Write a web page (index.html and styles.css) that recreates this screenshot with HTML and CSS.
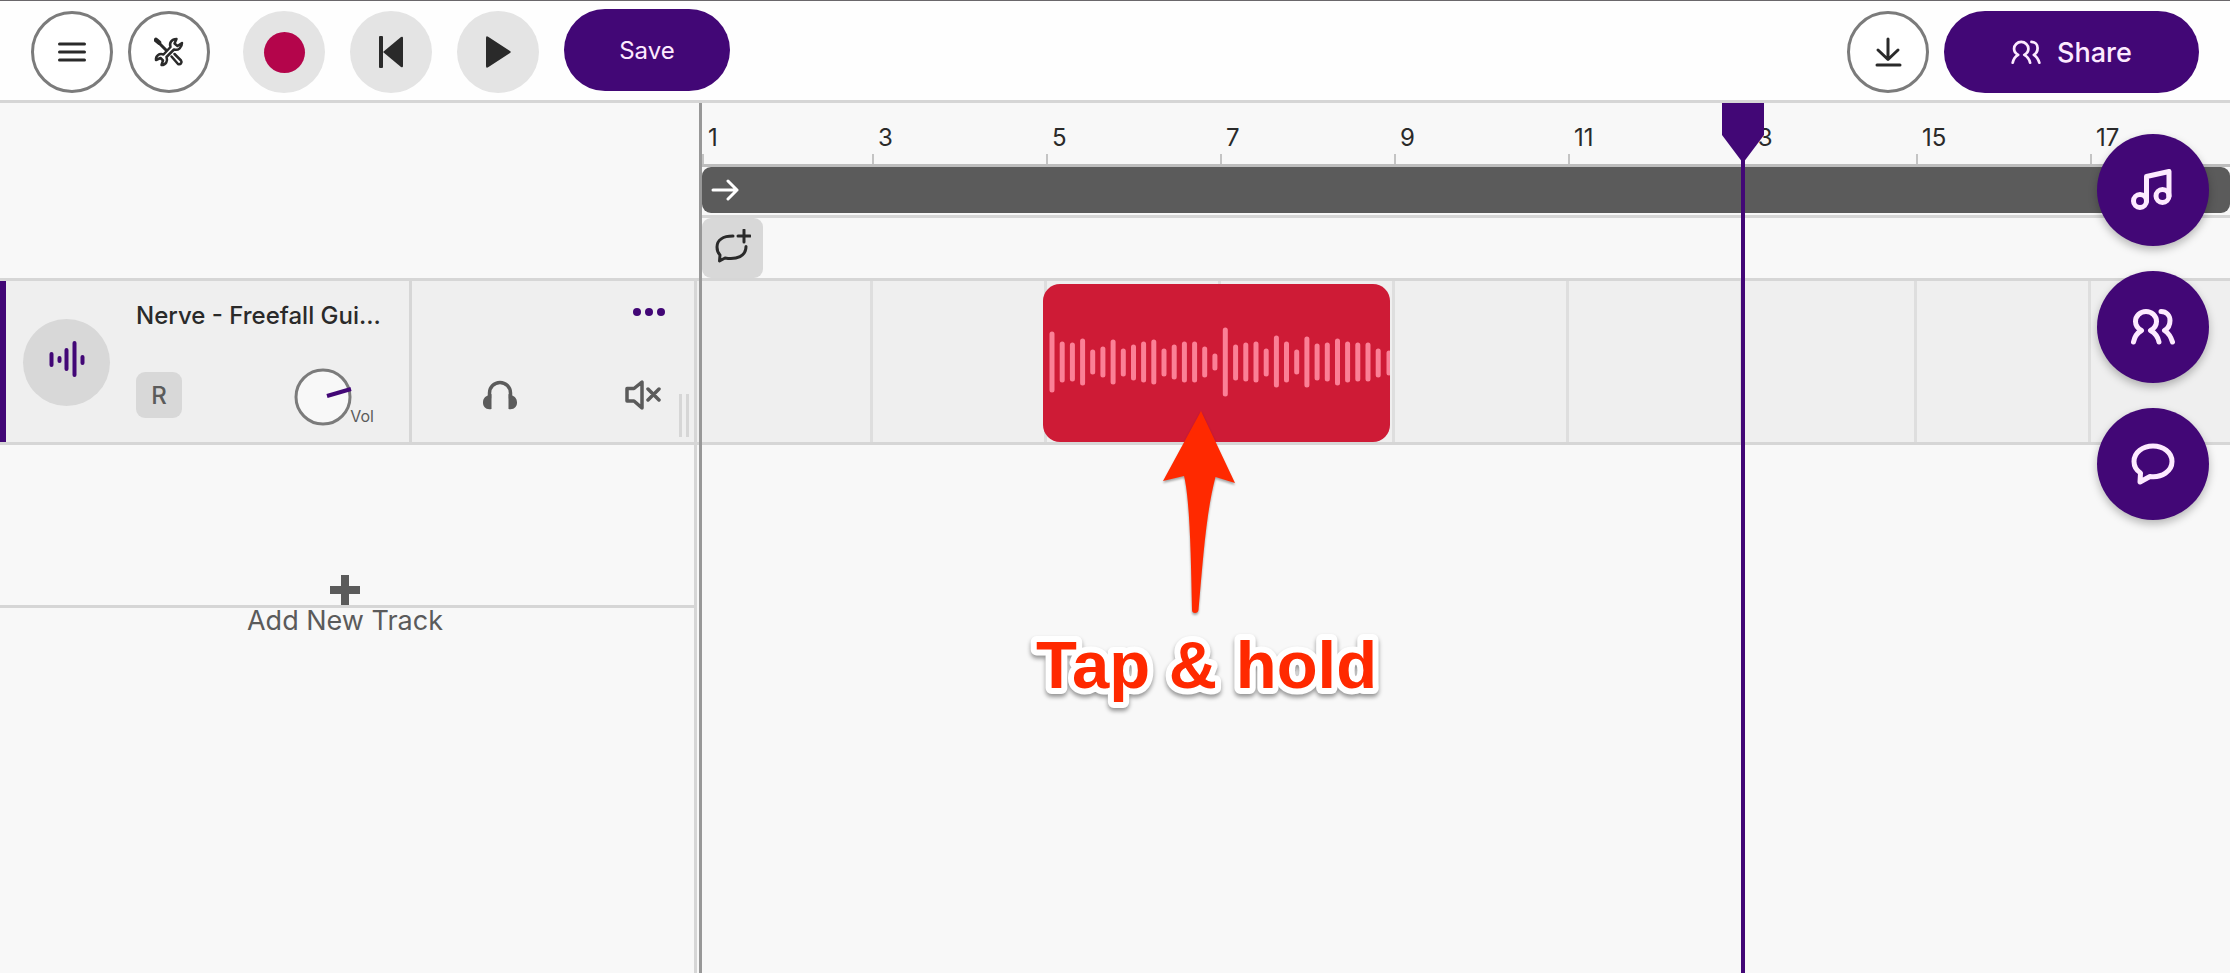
FILE: index.html
```html
<!DOCTYPE html>
<html lang="en">
<head>
<meta charset="utf-8">
<title>Studio</title>
<link rel="stylesheet" href="styles.css">
</head>
<body>
<svg class="defs" aria-hidden="true">
  <symbol id="people" viewBox="0 0 44 36">
    <path d="M2.500 33C3.500 28 6 24 10.500 21.500C6 19 4.500 16 4.500 12.500A10.500 10 0 0 1 25.500 12.500C25.500 16 24 19 19.500 21.500C24 24 27 28 28 33M30 2.500C35.500 2.500 39 6.500 39 11.500C39 16 38 19 33.500 21.500C37.500 24 40 28 41.500 33"/>
  </symbol>
</svg>
<header class="toolbar">
  <div class="group">
    <button class="round outline" aria-label="Menu"><svg width="28" height="24" viewBox="0 0 28 24" class="line"><path d="M1.500 4h25M1.500 12h25M1.500 20h25"/></svg></button>
    <button class="round outline" aria-label="Tools"><svg width="30" height="30" viewBox="0 0 30 30" class="line tools">
      <path d="M3 4L12 13" stroke-width="3"/><path d="M2 3L5 5.500" stroke-width="4.500"/>
      <path d="M17.500 19.500L24 27C26.500 28 28.500 25.500 27 23.500L20.500 17"/>
      <path d="M22.500 2C17.500 2 15 6 16.500 10L9.500 17.500C5 16 1.500 19 2 23L6.500 21L9 23.500L7.500 28C12 28 14 24 12.500 20L20 12.500C24.500 14 28 10 28 6L23.500 9L20.500 6.500Z"/>
    </svg></button>
  </div>
  <div class="group transport">
    <button class="round" aria-label="Record"><span class="record"></span></button>
    <button class="round" aria-label="Back to start"><svg width="28" height="34" viewBox="0 0 28 34" class="solid"><rect x="2" y="1" width="4" height="32" rx="1"/><path d="M6 17L24 2Q26 1 26 3V31Q26 33 24 32Z"/></svg></button>
    <button class="round" aria-label="Play"><svg width="28" height="34" viewBox="0 0 28 34" class="solid"><path d="M2 3Q2 0 4.500 2L26 16Q27.500 17 26 18L4.500 32Q2 34 2 31Z"/></svg></button>
  </div>
  <button class="pill save">Save</button>
  <div class="group end">
    <button class="round outline" aria-label="Download"><svg width="28" height="30" viewBox="0 0 28 30" class="line"><path d="M14 2V22M4 13L14 22.500L24 13M3 28h23"/></svg></button>
    <button class="pill share"><svg width="30" height="25" class="ico"><use href="#people"/></svg>Share</button>
  </div>
</header>
<main class="studio">
  <section class="tracks">
    <div class="tracks-head"></div>
    <article class="track">
      <div class="track-main">
        <span class="avatar"><svg width="36" height="36" viewBox="0 0 36 36"><path d="M2.500 13v11M10.500 17v3M17.500 9v19M25.500 2v32M33.500 16v6"/></svg></span>
        <div class="track-info">
          <h2>Nerve - Freefall Gui...</h2>
          <div class="track-row">
            <button class="rec">R</button>
            <div class="volume">
              <svg width="60" height="58" viewBox="0 0 60 58"><circle cx="29" cy="29" r="27"/><path d="M33 28L57 21"/></svg>
              <span>Vol</span>
            </div>
          </div>
        </div>
      </div>
      <div class="track-side">
        <button class="plain more" aria-label="More"><svg width="34" height="10" viewBox="0 0 34 10"><circle cx="5" cy="5" r="4"/><circle cx="17" cy="5" r="4"/><circle cx="29" cy="5" r="4"/></svg></button>
        <div class="track-tools">
          <button class="plain" aria-label="Solo"><svg width="36" height="30" viewBox="0 0 36 30" class="gray"><path class="stroke" d="M7.500 18V13A10.500 10.500 0 0 1 28.500 13V18"/><path d="M9.500 14V29C4 30 1 27 1 22.500C1 18 4 16 6 15.500ZM26.500 14V29C32 30 35 27 35 22.500C35 18 32 16 30 15.500Z"/></svg></button>
          <button class="plain" aria-label="Mute"><svg width="36" height="30" viewBox="0 0 36 30" class="gray"><path class="stroke" d="M2 8.500H9L17 2V28L9 21H2ZM23 9L34 20M34 9L23 20"/></svg></button>
        </div>
        <span class="grip"></span>
      </div>
    </article>
    <div class="add-lane">
      <button class="plain add"><svg width="30" height="30" viewBox="0 0 30 30"><path d="M15 0V30M0 15H30"/></svg>Add New Track</button>
    </div>
    <div class="tracks-rest"></div>
  </section>
  <section class="timeline">
    <ol class="ruler"><li>1</li><li>3</li><li>5</li><li>7</li><li>9</li><li>11</li><li>13</li><li>15</li><li>17</li></ol>
    <div class="loop-row"><div class="loop"><svg width="28" height="22" viewBox="0 0 28 22"><path d="M2 11H26M17 2L26 11L17 20"/></svg></div></div>
    <div class="marker-row"><button class="marker" aria-label="Add comment"><svg width="36" height="34" viewBox="0 0 36 34" class="line"><path d="M18 7C8 7 2 11 2 18C2 21.500 3.500 24.500 5 26L4.500 32L10 29C22 31 31 27 31 17.500M29 1V13M23 7H35"/></svg></button></div>
    <div class="lane">
      <i></i><i></i><i></i><i></i><i></i><i></i><i></i><i></i><i></i>
      <div class="clip"><svg width="347" height="158" viewBox="0 0 347 158">
        <path d="M9 50v56M19.200 60v36M29.400 61v34M39.600 57v42M49.700 68v20M59.900 65v26M70.100 58v40M80.300 67v23M90.500 63v31M100.600 60v36M110.800 58v40M121 67v23M131.200 63v30M141.400 60v36M151.600 60v36M161.700 65v26M171.900 72v12M182.300 46v64M192.600 63v31M202.800 61v34M213 60v36M223.200 67v23M233.400 54v47M243.500 60v36M253.700 68v20M263.900 55v46M274.100 62v32M284.300 61v34M294.500 57v42M304.600 60v36M314.800 61v34M325 61v34M335.200 67v24M346 69v20"/>
      </svg></div>
    </div>
    <div class="playhead"><svg width="42" height="60" viewBox="0 0 42 60"><path d="M0 0H42V32L21 60L0 32Z"/></svg></div>
    <svg class="arrow" width="74" height="208" viewBox="0 0 74 208"><path d="M39 1L73 73L53.500 67C44 103 41 150 36.500 200Q36 203 33 203Q30 203 30 200C29 150 28 90 22 66L1 71Z"/></svg>
    <svg class="caption" width="360" height="84"><text x="12" y="59">Tap &amp; hold</text></svg>
  </section>
</main>
<nav class="fabs">
  <button class="fab" aria-label="Sounds"><svg width="44" height="42" viewBox="0 0 44 42" class="ico"><circle cx="9" cy="32" r="6.500"/><circle cx="31.500" cy="27" r="6.500"/><path d="M15.500 32V7.500L38 2.500V27"/></svg></button>
  <button class="fab" aria-label="Collaborators"><svg width="44" height="36" class="ico"><use href="#people"/></svg></button>
  <button class="fab" aria-label="Chat"><svg width="44" height="42" viewBox="0 0 44 42" class="ico"><path d="M22 3C32 3 41 9 41 18.500C41 28 31 35 19 33.500L9 39L9.500 30C5 27 3 23 3 18.500C3 9 12 3 22 3Z"/></svg></button>
</nav>
</body>
</html>
```
FILE: styles.css
```css
* { box-sizing: border-box; }
body {
  --purple: #420776;
  --line: #d6d6d6;
  --gray: #5b5b5b;
  --ink: #2a2a2a;
  margin: 0;
  height: 100vh;
  display: flex;
  flex-direction: column;
  overflow: hidden;
  position: relative;
  background: #f8f8f8;
  color: var(--ink);
  font-family: Inter, "Liberation Sans", sans-serif;
  font-size: 24px;
}
button { font: inherit; color: inherit; border: 0; padding: 0; cursor: pointer; }
svg { display: block; fill: none; }
.defs { position: absolute; width: 0; height: 0; }
.line { stroke: var(--ink); stroke-width: 3; stroke-linecap: round; stroke-linejoin: round; }
.tools { stroke-width: 2.5; }
.solid { fill: var(--ink); }
.ico { stroke: #fdeaff; stroke-width: 4; stroke-linecap: round; stroke-linejoin: round; }

.toolbar {
  display: flex;
  align-items: center;
  flex: none;
  height: 103px;
  padding: 3px 31px 0;
  background: #fefefe;
  border-top: 1px solid #6a676b;
  border-bottom: 3px solid var(--line);
}
.group { display: flex; gap: 15px; }
.transport { gap: 25px; margin: 0 25px 0 33px; }
.end { margin-left: auto; }
.round {
  display: grid;
  place-items: center;
  width: 82px;
  height: 82px;
  border-radius: 50%;
  background: #e4e4e4;
}
.outline { background: #fff; border: 3px solid #7b7b7b; }
.record { width: 41px; height: 41px; border-radius: 50%; background: #b4054b; }
.pill {
  display: flex;
  align-items: center;
  justify-content: center;
  gap: 16px;
  height: 82px;
  border-radius: 41px;
  background: var(--purple);
  color: #fdeaff;
}
.save { width: 166px; margin-bottom: 4px; }
.share { width: 255px; font-size: 27px; font-weight: 500; }

.studio { display: flex; flex: 1; min-height: 0; }
.tracks { flex: none; width: 699px; display: flex; flex-direction: column; }
.tracks-head { height: 178px; border-bottom: 3px solid var(--line); }
.track {
  display: flex;
  height: 164px;
  background: #efefef;
  border-bottom: 3px solid var(--line);
}
.track-main {
  display: flex;
  width: 412px;
  padding: 20px 24px 20px 23px;
  gap: 26px;
  border-right: 3px solid var(--line);
  box-shadow: inset 6px 0 var(--purple);
}
.avatar {
  display: grid;
  place-items: center;
  flex: none;
  width: 87px;
  height: 87px;
  margin-top: 18px;
  padding-bottom: 7px;
  border-radius: 50%;
  background: #d8d8d8;
}
.avatar svg { stroke: var(--purple); stroke-width: 4; stroke-linecap: round; }
.track-info { flex: 1; display: flex; flex-direction: column; justify-content: space-between; }
h2 { margin: 0; font-size: 24px; line-height: 30px; font-weight: 500; white-space: nowrap; }
.track-row { display: flex; justify-content: space-between; align-items: flex-start; height: 50px; }
.rec {
  width: 46px;
  height: 46px;
  border-radius: 9px;
  background: #d8d8d8;
  color: var(--gray);
  font-weight: 500;
}
.volume { display: flex; align-items: flex-end; margin: -4px 11px 0 0; }
.volume svg { margin-right: -4px; }
.volume circle { fill: #f8f8f8; stroke: #7b7b7b; stroke-width: 3; }
.volume path { stroke: var(--purple); stroke-width: 4; }
.volume span { font-size: 16px; line-height: 20px; color: var(--gray); }
.track-side {
  flex: 1;
  position: relative;
  display: flex;
  flex-direction: column;
  justify-content: space-between;
  padding: 26px 33px 32px 70px;
  border-right: 3px solid var(--line);
  margin-right: 2px;
}
.plain { background: none; }
.more { align-self: flex-end; margin-right: -5px; }
.more circle { fill: var(--purple); }
.track-tools { display: flex; justify-content: space-between; }
.gray { fill: var(--gray); }
.stroke { fill: none; stroke: var(--gray); stroke-width: 3.5; stroke-linecap: round; stroke-linejoin: round; }
.grip {
  position: absolute;
  right: 5px;
  bottom: 5px;
  width: 10px;
  height: 43px;
  border: solid var(--line);
  border-width: 0 3px;
}
.add-lane {
  position: relative;
  height: 163px;
  margin-right: 2px;
  border-bottom: 3px solid var(--line);
  border-right: 3px solid var(--line);
}
.add {
  position: absolute;
  top: 130px;
  left: 0;
  right: 4px;
  display: flex;
  flex-direction: column;
  align-items: center;
  color: var(--gray);
  font-size: 27px;
  line-height: 32px;
}
.add svg { stroke: var(--gray); stroke-width: 8; }
.tracks-rest { flex: 1; margin-right: 2px; border-right: 3px solid var(--line); }

.timeline {
  position: relative;
  flex: 1;
  min-width: 0;
  overflow: hidden;
  border-left: 3px solid #989898;
}
.ruler {
  display: grid;
  grid-template-columns: 170px repeat(8, 174px);
  height: 64px;
  margin: 0;
  padding: 0;
  list-style: none;
  border-bottom: 3px solid #bdbdbd;
}
.ruler li {
  padding: 19px 0 0 6px;
  line-height: 32px;
  background: linear-gradient(#c4c4c4, #c4c4c4) 0 51px / 2px 10px no-repeat;
}
.loop-row { height: 51px; padding-bottom: 2px; border-bottom: 3px solid var(--line); }
.loop {
  display: flex;
  align-items: center;
  height: 46px;
  padding-left: 9px;
  border-radius: 9px;
  background: var(--gray);
}
.loop svg { stroke: #fff; stroke-width: 3; stroke-linecap: round; stroke-linejoin: round; }
.marker-row { height: 63px; border-bottom: 3px solid var(--line); }
.marker {
  display: grid;
  place-items: center;
  width: 61px;
  height: 60px;
  padding-bottom: 4px;
  border-radius: 9px;
  background: #d8d8d8;
}
.lane {
  position: relative;
  display: grid;
  grid-template-columns: 171px repeat(8, 174px);
  height: 164px;
  background: #efefef;
  border-bottom: 3px solid var(--line);
}
.lane i { border-right: 3px solid #dedede; }
.clip {
  position: absolute;
  left: 341px;
  top: 3px;
  border-radius: 17px;
  overflow: hidden;
  background: #ce1b36;
}
.clip svg { stroke: #fb8096; stroke-width: 5; stroke-linecap: round; }
.playhead {
  position: absolute;
  top: 0;
  left: 1020px;
  height: 100%;
  background: linear-gradient(var(--purple), var(--purple)) 19px 0 / 4px 100% no-repeat;
}
.playhead path { fill: var(--purple); }
.arrow { position: absolute; left: 460px; top: 307px; filter: drop-shadow(0 2px 1px #0005); }
.arrow path { fill: #ff2900; }
.caption {
  position: absolute;
  left: 322px;
  top: 526px;
  overflow: visible;
  filter: drop-shadow(0 3px 2px #0006);
}
.caption text {
  font: bold 67px "Liberation Sans", sans-serif;
  fill: #ff2900;
  stroke: #fff;
  stroke-width: 12px;
  stroke-linejoin: round;
  paint-order: stroke fill;
}
.fabs {
  position: absolute;
  top: 134px;
  right: 21px;
  display: flex;
  flex-direction: column;
  gap: 25px;
}
.fab {
  display: grid;
  place-items: center;
  width: 112px;
  height: 112px;
  border-radius: 50%;
  background: var(--purple);
  box-shadow: 0 4px 8px #0004;
}
.fab .ico { stroke-width: 5; }
```
